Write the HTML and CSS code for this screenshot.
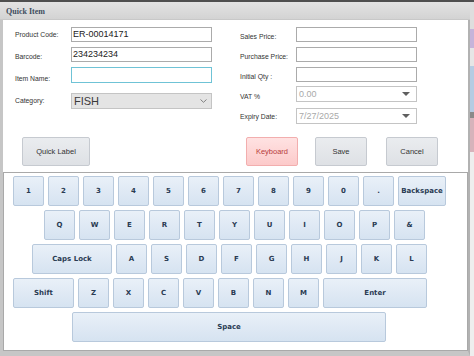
FILE: index.html
```html
<!DOCTYPE html>
<html>
<head>
<meta charset="utf-8">
<link rel="stylesheet" href="styles.css">
</head>
<body>
<div class="screen">
  <div class="window">
    <div class="titlebar">Quick Item</div>
    <div class="client">
      <div class="form">
        <div class="fields">
          <div class="labels labels-left">
            <span>Product Code:</span>
            <span>Barcode:</span>
            <span>Item Name:</span>
            <span>Category:</span>
          </div>
          <div class="inputs inputs-left">
            <div class="tb">ER-00014171</div>
            <div class="tb gap5">234234234</div>
            <div class="tb tb-focus gap5"></div>
            <div class="cb cb-cat gap10"><span>FISH</span>
              <svg class="chev" width="7" height="4" viewBox="0 0 7 4"><polyline points="0.5,0.5 3.5,3.3 6.5,0.5" fill="none" stroke="#808080" stroke-width="1"/></svg>
            </div>
          </div>
          <div class="labels labels-right">
            <span>Sales Price:</span>
            <span>Purchase Price:</span>
            <span>Initial Qty :</span>
            <span>VAT %</span>
            <span>Expiry Date:</span>
          </div>
          <div class="inputs inputs-right">
            <div class="tb"></div>
            <div class="tb gap5"></div>
            <div class="tb gap5"></div>
            <div class="cb cb-dis gap4"><span>0.00</span>
              <svg class="tri" width="8" height="4" viewBox="0 0 8 4"><polygon points="0,0 8,0 4,4" fill="#5f5f5f"/></svg>
            </div>
            <div class="cb cb-dis gap6"><span>7/27/2025</span>
              <svg class="tri" width="8" height="4" viewBox="0 0 8 4"><polygon points="0,0 8,0 4,4" fill="#5f5f5f"/></svg>
            </div>
          </div>
        </div>
        <div class="buttons">
          <div class="btn btn-quick">Quick Label</div>
          <div class="btn btn-pink btn-kbd">Keyboard</div>
          <div class="btn btn-save">Save</div>
          <div class="btn btn-cancel">Cancel</div>
        </div>
      </div>
      <div class="keyboard">
        <div class="krow r1">
          <div class="key">1</div><div class="key">2</div><div class="key">3</div><div class="key">4</div><div class="key">5</div><div class="key">6</div><div class="key">7</div><div class="key">8</div><div class="key">9</div><div class="key">0</div><div class="key">.</div><div class="key k-back">Backspace</div>
        </div>
        <div class="krow r2">
          <div class="key">Q</div><div class="key">W</div><div class="key">E</div><div class="key">R</div><div class="key">T</div><div class="key">Y</div><div class="key">U</div><div class="key">I</div><div class="key">O</div><div class="key">P</div><div class="key">&amp;</div>
        </div>
        <div class="krow r3">
          <div class="key k-caps">Caps Lock</div><div class="key">A</div><div class="key">S</div><div class="key">D</div><div class="key">F</div><div class="key">G</div><div class="key">H</div><div class="key">J</div><div class="key">K</div><div class="key">L</div>
        </div>
        <div class="krow r4">
          <div class="key k-shift">Shift</div><div class="key">Z</div><div class="key">X</div><div class="key">C</div><div class="key">V</div><div class="key">B</div><div class="key">N</div><div class="key">M</div><div class="key k-enter">Enter</div>
        </div>
        <div class="krow r5">
          <div class="key k-space">Space</div>
        </div>
      </div>
    </div>
  </div>
  <div class="strip">
    <div class="s s1"></div>
    <div class="s s2"></div>
    <div class="s s3"></div>
    <div class="s s4"></div>
    <div class="s s5"></div>
    <div class="s s6"></div>
    <div class="s s7"></div>
  </div>
</div>
</body>
</html>
```
FILE: styles.css
```css
* { box-sizing: border-box; }
html, body { margin: 0; padding: 0; }
body {
  width: 474px;
  height: 356px;
  overflow: hidden;
  background: #eeeeee;
  font-family: "Liberation Sans", Arial, sans-serif;
}
.screen { display: flex; height: 356px; }
.window { width: 470px; display: flex; flex-direction: column; }
.titlebar {
  height: 20px;
  border-top: 2px solid #4f4f4f;
  background: linear-gradient(#e3e3e3, #d3d3d3);
  font-family: "Liberation Serif", "Times New Roman", serif;
  font-weight: bold;
  font-size: 8px;
  color: #3d4b5d;
  padding: 1px 0 0 6px;
  line-height: 17px;
  border-bottom: 1px solid #c8c8c8;
}
.client {
  flex: 1;
  display: flex;
  flex-direction: column;
  border-left: 3px solid #c6c6c6;
  border-right: 2px solid #b2b2b2;
  border-bottom: 5px solid #c6c6c6;
  background: #ffffff;
}
.form { height: 152px; display: flex; flex-direction: column; }
.fields { height: 117px; display: flex; padding-left: 12px; }
.labels {
  display: flex;
  flex-direction: column;
  width: 56px;
  font-size: 6.8px;
  color: #333333;
}
.labels span { white-space: nowrap; }
.labels-left { padding-top: 3.5px; }
.labels-left span { height: 22px; line-height: 22px; }
.labels-right { padding-top: 7px; }
.labels-right span { height: 20px; line-height: 20px; }
.inputs { display: flex; flex-direction: column; padding-top: 7px; }
.inputs-left { width: 141px; margin-right: 28px; }
.inputs-right { width: 121px; }
.gap4 { margin-top: 4px; }
.gap5 { margin-top: 5px; }
.gap6 { margin-top: 6px; }
.gap10 { margin-top: 10px; }
.tb {
  height: 15px;
  border: 1px solid #ababab;
  font-size: 9px;
  line-height: 13px;
  padding-left: 1px;
  color: #222222;
  background: #ffffff;
}
.tb-focus { height: 16px; border-color: #6fc3d6; }
.cb {
  height: 16px;
  display: flex;
  align-items: center;
  justify-content: space-between;
  border: 1px solid #c4c4c4;
}
.cb-cat {
  background: #e4e4e4;
  font-size: 11px;
  color: #3a3a3a;
  padding: 0 4px 0 2px;
}
.cb-dis {
  background: #ffffff;
  color: #a9a9a9;
  font-size: 9px;
  padding: 0 6px 0 2px;
}
.chev, .tri { display: block; }
.buttons { height: 29px; display: flex; }
.btn {
  height: 29px;
  width: 52px;
  border: 1px solid #c6cad0;
  border-radius: 2px;
  background: linear-gradient(#eaecef, #dee1e5);
  font-size: 7.5px;
  color: #333333;
  display: flex;
  align-items: center;
  justify-content: center;
}
.btn-quick { width: 68px; margin-left: 19px; }
.btn-kbd { margin-left: 156px; }
.btn-save { margin-left: 17px; }
.btn-cancel { margin-left: 19px; }
.btn-pink {
  background: linear-gradient(#ffe2e2, #fccaca);
  border-color: #f2aeae;
  color: #b83c3c;
}
.keyboard {
  flex: 1;
  border: 1px solid #a9a9a9;
  padding-top: 3px;
  display: flex;
  flex-direction: column;
  gap: 4px;
  background: #ffffff;
}
.krow { display: flex; gap: 4px; height: 30px; }
.r1 { padding-left: 9px; }
.r2 { padding-left: 40px; }
.r3 { padding-left: 28px; }
.r4 { padding-left: 9px; }
.r5 { padding-left: 68px; }
.key {
  width: 31px;
  height: 30px;
  flex: none;
  display: flex;
  align-items: center;
  justify-content: center;
  border: 1px solid #b8c9dc;
  border-radius: 2px;
  background: linear-gradient(#e9f0f8, #d6e3f1);
  font-family: "DejaVu Sans", Verdana, sans-serif;
  font-weight: bold;
  font-size: 7px;
  color: #2a3b53;
  white-space: nowrap;
}
.k-back { width: 48px; }
.k-caps { width: 80px; }
.k-shift { width: 61px; }
.k-enter { width: 104px; }
.k-space { width: 314px; }
.strip {
  width: 4px;
  display: flex;
  flex-direction: column;
  border-top: 2px solid #4f4f4f;
}
.s1 { height: 27px; background: #dedede; }
.s2 { height: 19px; background: #c6b4da; }
.s3 { height: 18px; background: #e6e6e6; }
.s4 { height: 46px; background: #b6cce3; }
.s5 { height: 6px; background: #8a8a8a; }
.s6 { height: 34px; background: #d7b3bb; }
.s7 { flex: 1; background: #eeeeee; }
```
